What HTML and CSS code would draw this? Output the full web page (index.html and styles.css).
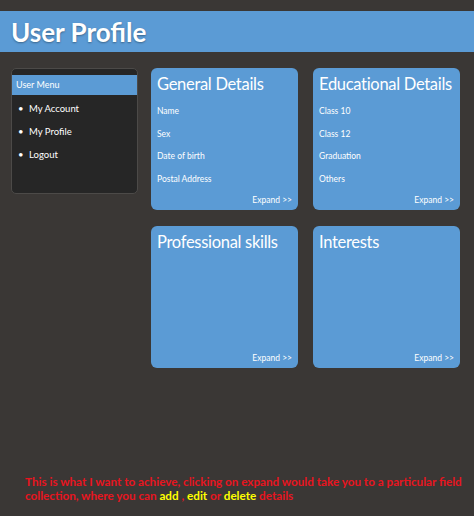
FILE: index.html
```html
<!DOCTYPE html>
<html lang="en">
<head>
    <meta charset="UTF-8">
    <meta name="viewport" content="width=device-width, initial-scale=1.0">
    <title>User Profile</title>
    <link rel="stylesheet" href="styles.css">
</head>
<body>
    <header class="page-header">
        <h1>User Profile</h1>
    </header>

    <div class="content">
        <!-- Side menu -->
        <nav class="side-menu">
            <div class="side-menu-title">User Menu</div>
            <ul>
                <li>My Account</li>
                <li>My Profile</li>
                <li>Logout</li>
            </ul>
        </nav>

        <!-- Profile sections -->
        <div class="cards">
            <div class="card">
                <h2>General Details</h2>
                <ul class="fields">
                    <li>Name</li>
                    <li>Sex</li>
                    <li>Date of birth</li>
                    <li>Postal Address</li>
                </ul>
                <a href="#" class="expand">Expand &gt;&gt;</a>
            </div>
            <div class="card">
                <h2>Educational Details</h2>
                <ul class="fields">
                    <li>Class 10</li>
                    <li>Class 12</li>
                    <li>Graduation</li>
                    <li>Others</li>
                </ul>
                <a href="#" class="expand">Expand &gt;&gt;</a>
            </div>
            <div class="card">
                <h2>Professional skills</h2>
                <a href="#" class="expand">Expand &gt;&gt;</a>
            </div>
            <div class="card">
                <h2>Interests</h2>
                <a href="#" class="expand">Expand &gt;&gt;</a>
            </div>
        </div>
    </div>

    <p class="note">
        <span class="line">This is what I want to achieve, clicking on expand would take you to a particular field</span>
        <span class="line">collection, where you can <span class="hl">add</span> , <span class="hl">edit</span> or <span class="hl">delete</span> details</span>
    </p>
</body>
</html>
```

FILE: styles.css
```css
/* General Styles */
body {
    font-family: Lato, 'Open Sans', sans-serif;
    background: #3a3735;
    margin: 0;
    padding: 11px 0 0;
    height: 516px;
    box-sizing: border-box;
    display: flex;
    flex-direction: column;
    color: #fff;
}

.page-header {
    background: #5b9bd5;
    height: 41px;
    display: flex;
    align-items: center;
    padding-left: 11px;
}

.page-header h1 {
    margin: 0;
    font-size: 26px;
    font-weight: 700;
    text-shadow: 0 1px 2px rgba(0, 0, 0, 0.35);
}

.content {
    display: flex;
    align-items: flex-start;
    gap: 13px;
    padding: 16px 0 0 11px;
}

/* Side menu */
.side-menu {
    width: 127px;
    height: 126px;
    box-sizing: border-box;
    background: #262626;
    border: 1px solid #4c4a48;
    border-radius: 5px;
    padding-top: 6px;
}

.side-menu-title {
    background: #5b9bd5;
    height: 20px;
    line-height: 20px;
    font-size: 9px;
    padding-left: 4px;
}

.side-menu ul {
    list-style: none;
    margin: 0;
    padding: 2px 0 0 6px;
}

.side-menu li {
    font-size: 9.5px;
    height: 23px;
    line-height: 23px;
}

.side-menu li::before {
    content: "\2022";
    display: inline-block;
    width: 11px;
}

/* Cards */
.cards {
    display: grid;
    grid-template-columns: 147px 147px;
    grid-auto-rows: 142px;
    column-gap: 15px;
    row-gap: 16px;
}

.card {
    background: #5b9bd5;
    border-radius: 6px;
    padding: 6px 6px 0;
    display: flex;
    flex-direction: column;
}

.card h2 {
    margin: 0;
    font-size: 16.5px;
    font-weight: 400;
    line-height: 20px;
    letter-spacing: -0.3px;
    white-space: nowrap;
}

.fields {
    list-style: none;
    margin: 0;
    padding: 6px 0 0;
}

.fields li {
    font-size: 8.5px;
    height: 22.5px;
    line-height: 22.5px;
}

.expand {
    margin-top: auto;
    align-self: flex-end;
    color: #fff;
    text-decoration: none;
    font-size: 8.5px;
    padding: 0 0 5px;
}

/* Footer note */
.note {
    margin: auto 0 0;
    padding: 0 4px 14px 25px;
    font-weight: 700;
    font-size: 11.7px;
    line-height: 14px;
    color: #e8141f;
}

.note .line {
    display: block;
    white-space: nowrap;
}

.note .hl {
    color: #ffff00;
}
```
